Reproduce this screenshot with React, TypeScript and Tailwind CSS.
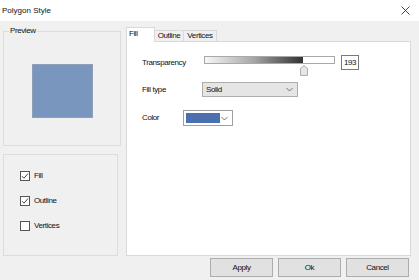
import { useState } from 'react'

const font = { fontFamily: '"Liberation Sans", Arial, sans-serif' }

function Check({ label, checked }: { label: string; checked: boolean }) {
  return (
    <div className="flex items-center gap-[4px] h-[11px]">
      <div className="w-[10px] h-[10px] border border-[#555] bg-white flex items-center justify-center">
        {checked && (
          <svg width="8" height="8" viewBox="0 0 8 8">
            <path d="M1 4.2 L3 6.2 L7 1.5" fill="none" stroke="#444" strokeWidth="1" />
          </svg>
        )}
      </div>
      <span className="text-[8px] tracking-[-0.4px] text-[#111]">{label}</span>
    </div>
  )
}

function Chevron() {
  return (
    <svg width="7" height="5" viewBox="0 0 7 5">
      <path d="M0.5 1 L3.5 4 L6.5 1" fill="none" stroke="#666" strokeWidth="0.9" />
    </svg>
  )
}

export default function App() {
  const [tab, setTab] = useState('Fill')
  const tabs = ['Fill', 'Outline', 'Vertices']
  const tabWidths: Record<string, string> = { Fill: 'w-[29px]', Outline: 'w-[29px]', Vertices: 'w-[33px]' }

  return (
    <div className="w-[419px] h-[280px] bg-[#f0f0f0] flex flex-col text-[#111]" style={font}>
      <div className="h-[21px] bg-white flex items-center justify-between pl-[2px] pr-[9px]">
        <span className="text-[8px]">Polygon Style</span>
        <svg width="9" height="9" viewBox="0 0 9 9">
          <path d="M0.5 0.5 L8.5 8.5 M8.5 0.5 L0.5 8.5" stroke="#333" strokeWidth="0.9" />
        </svg>
      </div>

      <div className="flex pt-[6px] pl-[3px] gap-[5px]">
        <div className="w-[118px] flex flex-col">
          <div className="relative mt-[4px] h-[115px] border border-[#dcdcdc] flex justify-center pt-[32px]">
            <span className="absolute -top-[6px] left-[5px] bg-[#f0f0f0] px-[1px] text-[8px] tracking-[-0.4px] leading-[10px]">
              Preview
            </span>
            <div className="w-[61px] h-[54px] bg-[#7896be] border border-[#8f9fb5]" />
          </div>
          <div className="mt-[8px] w-[115px] h-[102px] border border-[#dcdcdc] flex flex-col gap-[14px] pl-[16px] pt-[15px]">
            <Check label="Fill" checked />
            <Check label="Outline" checked />
            <Check label="Vertices" checked={false} />
          </div>
        </div>

        <div className="w-[285px] flex flex-col">
          <div className="flex h-[14px] items-end">
            {tabs.map((t) => (
              <button
                key={t}
                onClick={() => setTab(t)}
                className={
                  t === tab
                    ? `${tabWidths[t]} h-[15px] -mb-px bg-white border border-b-0 border-[#d9d9d9] text-left pl-[2px] text-[8px] tracking-[-0.4px] relative z-10 pb-[4px]`
                    : `${tabWidths[t]} h-[11px] bg-[#f0f0f0] border border-b-0 border-l-0 border-[#d9d9d9] text-[8px] tracking-[-0.4px] leading-[10px]`
                }
              >
                {t}
              </button>
            ))}
          </div>
          <div className="h-[215px] bg-white border border-[#d9d9d9] pl-[15px] pt-[14px] flex flex-col">
            <div className="flex items-start h-[20px]">
              <span className="w-[62px] text-[8px] tracking-[-0.4px] mt-[1px]">Transparency</span>
              <div className="relative w-[131px] h-[8px] border border-[#a8a8a8] bg-white">
                <div className="w-[98px] h-full bg-gradient-to-r from-[#f8f8f8] via-[#a6a6a6] to-[#333]" />
                <svg className="absolute left-[95px] top-[8px]" width="8" height="11" viewBox="0 0 8 11">
                  <path d="M0.5 3.5 L4 0.5 L7.5 3.5 L7.5 10.5 L0.5 10.5 Z" fill="#e6e6e6" stroke="#999" strokeWidth="0.8" />
                </svg>
              </div>
              <div className="ml-[6px] -mt-[1px] w-[18px] h-[15px] border border-[#7a7a7a] bg-white text-[8px] tracking-[-0.4px] flex items-center justify-center">
                193
              </div>
            </div>
            <div className="flex items-center mt-[6px] h-[15px]">
              <span className="w-[60px] text-[8px] tracking-[-0.4px]">Fill type</span>
              <div className="w-[96px] h-[15px] bg-[#e5e5e5] border border-[#adadad] flex items-center justify-between pl-[3px] pr-[4px]">
                <span className="text-[8px] tracking-[-0.4px]">Solid</span>
                <Chevron />
              </div>
            </div>
            <div className="flex items-center mt-[13px] h-[16px]">
              <span className="w-[41px] text-[8px] tracking-[-0.4px]">Color</span>
              <div className="w-[50px] h-[16px] bg-white border border-[#a0a0a0] flex items-center pl-[2px] pr-[4px] justify-between">
                <div className="w-[34px] h-[10px] bg-[#4a70b0]" />
                <Chevron />
              </div>
            </div>
          </div>
        </div>
      </div>

      <div className="flex justify-end gap-[5px] pr-[10px] mt-[2px]">
        {['Apply', 'Ok', 'Cancel'].map((b) => (
          <button
            key={b}
            className="w-[63px] h-[19px] bg-[#e1e1e1] border border-[#adadad] text-[8px] tracking-[-0.4px]"
          >
            {b}
          </button>
        ))}
      </div>
    </div>
  )
}
